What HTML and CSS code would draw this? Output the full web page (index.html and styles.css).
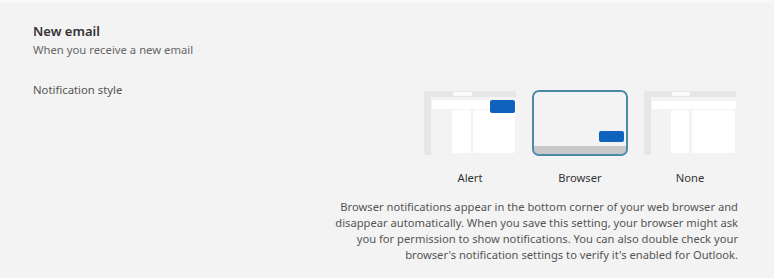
FILE: index.html
```html
<!DOCTYPE html>
<html>
<head>
<meta charset="utf-8">
<link rel="stylesheet" href="styles.css">
</head>
<body>
<div class="page">
  <div class="head">
    <div class="title">New email</div>
    <div class="subtitle">When you receive a new email</div>
  </div>
  <div class="style-row">
    <div class="style-label">Notification style</div>
    <div class="style-body">
      <div class="options">
        <div class="option">
          <svg class="thumb" width="96" height="66" viewBox="0 0 96 66">
            <rect x="2" y="1" width="92" height="64" rx="3" fill="#e6e6e6"/>
            <rect x="9" y="7" width="85" height="58" fill="#f3f3f3"/>
            <rect x="31" y="2" width="19" height="4" rx="1" fill="#fafafa"/>
            <rect x="10" y="10" width="84" height="9" fill="#ffffff"/>
            <rect x="30" y="20" width="19" height="43" rx="1.5" fill="#ffffff"/>
            <rect x="51" y="20" width="42" height="43" rx="2" fill="#ffffff"/>
            <rect x="68" y="10" width="25" height="13" rx="2" fill="#1063bd"/>
          </svg>
          <div class="option-label">Alert</div>
        </div>
        <div class="option">
          <div class="browser-thumb">
            <div class="browser-alert"></div>
            <div class="browser-bar"></div>
          </div>
          <div class="option-label">Browser</div>
        </div>
        <div class="option">
          <svg class="thumb" width="96" height="66" viewBox="0 0 96 66">
            <rect x="2" y="1" width="92" height="64" rx="3" fill="#e6e6e6"/>
            <rect x="9" y="7" width="85" height="58" fill="#f3f3f3"/>
            <rect x="30" y="2" width="18" height="4" rx="1" fill="#fafafa"/>
            <rect x="10" y="11" width="84" height="8" fill="#ffffff"/>
            <rect x="29" y="20" width="18" height="43" rx="1.5" fill="#ffffff"/>
            <rect x="50" y="20" width="43" height="43" rx="2" fill="#ffffff"/>
          </svg>
          <div class="option-label">None</div>
        </div>
      </div>
      <p class="desc">Browser notifications appear in the bottom corner of your web browser and<br>disappear automatically. When you save this setting, your browser might ask<br>you for permission to show notifications. You can also double check your<br>browser's notification settings to verify it's enabled for Outlook.</p>
    </div>
  </div>
</div>
</body>
</html>
```
FILE: styles.css
```css
html, body {
  margin: 0;
  padding: 0;
  background: #f3f3f3;
}
body {
  font-family: "Noto Sans", "Open Sans", sans-serif;
  color: #333;
  border-top: 3px solid #f8f8f8;
}
.page {
  padding: 19px 36px 0 33px;
}
.title {
  font-size: 13px;
  font-weight: 600;
  line-height: 18px;
  color: #333;
}
.subtitle {
  font-size: 11.3px;
  line-height: 16px;
  margin-top: 2px;
  color: #666;
}
.style-row {
  display: flex;
  justify-content: space-between;
  margin-top: 24px;
}
.style-label {
  font-size: 11.3px;
  line-height: 16px;
  color: #555;
}
.style-body {
  display: flex;
  flex-direction: column;
  align-items: flex-end;
  padding-top: 8px;
}
.options {
  display: flex;
  gap: 14px;
}
.option {
  width: 96px;
  display: flex;
  flex-direction: column;
  align-items: center;
}
.thumb {
  display: block;
}
.browser-thumb {
  box-sizing: border-box;
  width: 96px;
  height: 66px;
  border: 2px solid #4a8aa8;
  border-radius: 7px;
  background: #f3f3f3;
  overflow: hidden;
  display: flex;
  flex-direction: column;
  justify-content: flex-end;
  align-items: flex-end;
}
.browser-alert {
  width: 25px;
  height: 11px;
  background: #1063bd;
  border-radius: 2px;
  margin: 0 2px 4px 0;
}
.browser-bar {
  align-self: stretch;
  height: 8px;
  background: #c8c8c8;
}
.option-label {
  font-size: 11.2px;
  line-height: 16px;
  margin-top: 14px;
  color: #333;
}
.desc {
  margin: 13px 0 0;
  text-align: right;
  font-size: 11.2px;
  line-height: 16px;
  color: #555;
}
```
